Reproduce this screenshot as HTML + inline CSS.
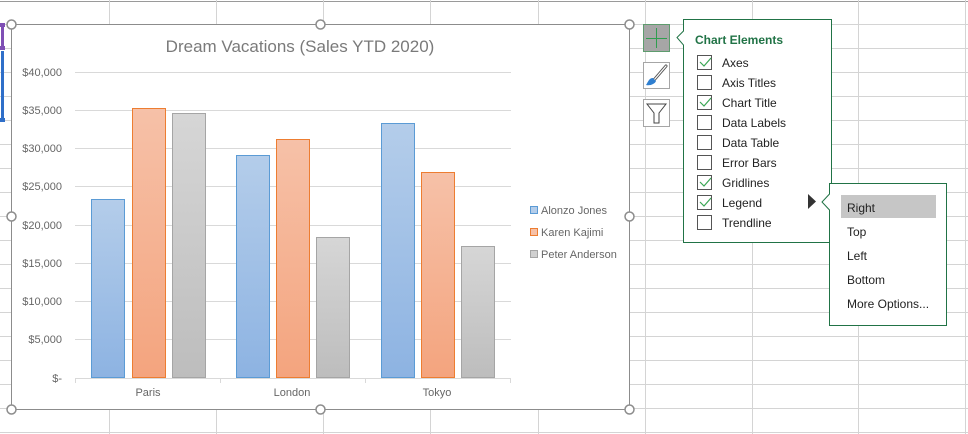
<!DOCTYPE html>
<html><head><meta charset="utf-8"><style>
body{margin:0;width:968px;height:434px;overflow:hidden;background:#fff;font-family:"Liberation Sans",sans-serif}
svg{position:absolute;left:0;top:0}
text{font-family:"Liberation Sans",sans-serif}
</style></head><body>
<svg width="968" height="434" viewBox="0 0 968 434">
<defs>
<linearGradient id="gb" x1="0" y1="0" x2="0" y2="1"><stop offset="0" stop-color="#b4cdea"/><stop offset="1" stop-color="#8db3e2"/></linearGradient>
<linearGradient id="go" x1="0" y1="0" x2="0" y2="1"><stop offset="0" stop-color="#f6c1a8"/><stop offset="1" stop-color="#f4a47e"/></linearGradient>
<linearGradient id="gg" x1="0" y1="0" x2="0" y2="1"><stop offset="0" stop-color="#d6d6d6"/><stop offset="1" stop-color="#bdbdbd"/></linearGradient>
</defs>
<!-- grid -->
<g stroke="#d4d4d4" stroke-width="1">
<line x1="0" y1="1.5" x2="968" y2="1.5" stroke="#9a9a9a"/>
<line x1="0" y1="24.5" x2="968" y2="24.5"/><line x1="0" y1="48.5" x2="968" y2="48.5"/><line x1="0" y1="72.5" x2="968" y2="72.5"/><line x1="0" y1="96.5" x2="968" y2="96.5"/><line x1="0" y1="120.5" x2="968" y2="120.5"/><line x1="0" y1="144.5" x2="968" y2="144.5"/><line x1="0" y1="168.5" x2="968" y2="168.5"/><line x1="0" y1="192.5" x2="968" y2="192.5"/><line x1="0" y1="216.5" x2="968" y2="216.5"/><line x1="0" y1="240.5" x2="968" y2="240.5"/><line x1="0" y1="264.5" x2="968" y2="264.5"/><line x1="0" y1="288.5" x2="968" y2="288.5"/><line x1="0" y1="312.5" x2="968" y2="312.5"/><line x1="0" y1="336.5" x2="968" y2="336.5"/><line x1="0" y1="360.5" x2="968" y2="360.5"/><line x1="0" y1="384.5" x2="968" y2="384.5"/><line x1="0" y1="408.5" x2="968" y2="408.5"/><line x1="0" y1="432.5" x2="968" y2="432.5"/>
<line x1="109.5" y1="0" x2="109.5" y2="434"/><line x1="216.5" y1="0" x2="216.5" y2="434"/><line x1="323.5" y1="0" x2="323.5" y2="434"/><line x1="430.5" y1="0" x2="430.5" y2="434"/><line x1="538.5" y1="0" x2="538.5" y2="434"/><line x1="645.5" y1="0" x2="645.5" y2="434"/><line x1="752.5" y1="0" x2="752.5" y2="434"/><line x1="858.5" y1="0" x2="858.5" y2="434"/><line x1="965.5" y1="0" x2="965.5" y2="434"/>
</g>
<!-- left selection -->
<rect x="1" y="25" width="3" height="24" fill="#7f4fb5"/><rect x="0" y="23" width="5" height="4" fill="#7f4fb5"/><rect x="0" y="46" width="5" height="4" fill="#7f4fb5"/>
<rect x="1" y="51" width="3" height="70" fill="#2f6fc9"/><rect x="0" y="118" width="5" height="4" fill="#2f6fc9"/>
<!-- chart -->
<rect x="11.5" y="24.5" width="618" height="385" fill="#fff" stroke="#8c8c8c"/>
<text x="300" y="52" font-size="17" fill="#7a7a7a" text-anchor="middle">Dream Vacations (Sales YTD 2020)</text>
<g stroke="#d9d9d9"><line x1="75" y1="72.5" x2="511" y2="72.5"/><line x1="75" y1="110.5" x2="511" y2="110.5"/><line x1="75" y1="148.5" x2="511" y2="148.5"/><line x1="75" y1="186.5" x2="511" y2="186.5"/><line x1="75" y1="225.5" x2="511" y2="225.5"/><line x1="75" y1="263.5" x2="511" y2="263.5"/><line x1="75" y1="301.5" x2="511" y2="301.5"/><line x1="75" y1="339.5" x2="511" y2="339.5"/><line x1="75" y1="378.5" x2="511" y2="378.5"/>
<line x1="75.5" y1="378" x2="75.5" y2="383"/><line x1="220.5" y1="378" x2="220.5" y2="383"/><line x1="365.5" y1="378" x2="365.5" y2="383"/><line x1="510.5" y1="378" x2="510.5" y2="383"/></g>
<g font-size="11" fill="#666" text-anchor="end">
<text x="62" y="76">$40,000</text><text x="62" y="114">$35,000</text><text x="62" y="152">$30,000</text><text x="62" y="190">$25,000</text><text x="62" y="229">$20,000</text><text x="62" y="267">$15,000</text><text x="62" y="305">$10,000</text><text x="62" y="343">$5,000</text><text x="62" y="382">$-</text></g>
<g>
<rect x="91.5" y="199.5" width="33" height="178" fill="url(#gb)" stroke="#5b9bd5"/>
<rect x="132.5" y="108.5" width="33" height="269" fill="url(#go)" stroke="#ed7d31"/>
<rect x="172.5" y="113.5" width="33" height="264" fill="url(#gg)" stroke="#a5a5a5"/>
<rect x="236.5" y="155.5" width="33" height="222" fill="url(#gb)" stroke="#5b9bd5"/>
<rect x="276.5" y="139.5" width="33" height="238" fill="url(#go)" stroke="#ed7d31"/>
<rect x="316.5" y="237.5" width="33" height="140" fill="url(#gg)" stroke="#a5a5a5"/>
<rect x="381.5" y="123.5" width="33" height="254" fill="url(#gb)" stroke="#5b9bd5"/>
<rect x="421.5" y="172.5" width="33" height="205" fill="url(#go)" stroke="#ed7d31"/>
<rect x="461.5" y="246.5" width="33" height="131" fill="url(#gg)" stroke="#a5a5a5"/>
</g>
<g font-size="11" fill="#666" text-anchor="middle"><text x="148" y="396">Paris</text><text x="292" y="396">London</text><text x="437" y="396">Tokyo</text></g>
<rect x="530.5" y="206.5" width="7" height="7" fill="#b4cdea" stroke="#5b9bd5"/>
<rect x="530.5" y="228.5" width="7" height="7" fill="#f6c1a8" stroke="#ed7d31"/>
<rect x="530.5" y="250.5" width="7" height="7" fill="#d0d0d0" stroke="#a5a5a5"/>
<g font-size="11" fill="#666"><text x="541" y="214">Alonzo Jones</text><text x="541" y="236">Karen Kajimi</text><text x="541" y="258">Peter Anderson</text></g>
<g fill="#fff" stroke="#8c8c8c" stroke-width="1.5">
<circle cx="11.5" cy="24.5" r="4.5"/><circle cx="320.5" cy="24.5" r="4.5"/><circle cx="629.5" cy="24.5" r="4.5"/>
<circle cx="11.5" cy="216.5" r="4.5"/><circle cx="629.5" cy="216.5" r="4.5"/>
<circle cx="11.5" cy="409.5" r="4.5"/><circle cx="320.5" cy="409.5" r="4.5"/><circle cx="629.5" cy="409.5" r="4.5"/></g>
<!-- side buttons -->
<rect x="643.5" y="24.5" width="26" height="27" fill="#a6a6a6" stroke="#5e9c6e"/>
<path d="M656.5 28v20M646 38.5h21" stroke="#2f9e4f" stroke-width="1"/>
<rect x="643.5" y="62.5" width="26" height="26" fill="#fff" stroke="#a6a6a6"/>
<path d="M666 66 L654 80" stroke="#555" stroke-width="3" stroke-linecap="round"/><path d="M666 66 L654 80" stroke="#fff" stroke-width="1.2" stroke-linecap="round"/>
<path d="M653 78 C649 78 648 82 646 85 C650 86 655 84 656 81 Z" fill="#2f7fd0"/>
<rect x="643.5" y="99.5" width="26" height="27" fill="#fff" stroke="#a6a6a6"/>
<path d="M647 104 H666 L659 113 V123 H654 V113 Z" fill="#fff" stroke="#444"/>
<!-- chart elements panel -->
<path d="M683.5 19.5 H831.5 V242.5 H683.5 V45 L677 37.5 L683.5 31 Z" fill="#fff" stroke="#217346"/>
<text x="695" y="44" font-size="12" font-weight="bold" fill="#217346">Chart Elements</text>
<g fill="#fff" stroke="#555"><rect x="697.5" y="55.5" width="14" height="14"/><rect x="697.5" y="75.5" width="14" height="14"/><rect x="697.5" y="95.5" width="14" height="14"/><rect x="697.5" y="115.5" width="14" height="14"/><rect x="697.5" y="135.5" width="14" height="14"/><rect x="697.5" y="155.5" width="14" height="14"/><rect x="697.5" y="175.5" width="14" height="14"/><rect x="697.5" y="195.5" width="14" height="14"/><rect x="697.5" y="215.5" width="14" height="14"/></g>
<g fill="none" stroke="#3aa655" stroke-width="1.2"><path d="M700 62 l4 4 l7 -8"/><path d="M700 102 l4 4 l7 -8"/><path d="M700 182 l4 4 l7 -8"/><path d="M700 202 l4 4 l7 -8"/></g>
<g font-size="12" fill="#222"><text x="722" y="67">Axes</text><text x="722" y="87">Axis Titles</text><text x="722" y="107">Chart Title</text><text x="722" y="127">Data Labels</text><text x="722" y="147">Data Table</text><text x="722" y="167">Error Bars</text><text x="722" y="187">Gridlines</text><text x="722" y="207">Legend</text><text x="722" y="227">Trendline</text></g>
<path d="M808 194 L816 201.5 L808 209 Z" fill="#333"/>
<!-- submenu -->
<path d="M829.5 183.5 H946.5 V325.5 H829.5 V210 L822 202 L829.5 194 Z" fill="#fff" stroke="#217346"/>
<rect x="841" y="195" width="95" height="23" fill="#c6c6c6"/>
<g font-size="12" fill="#222"><text x="847" y="212">Right</text><text x="847" y="236">Top</text><text x="847" y="260">Left</text><text x="847" y="284">Bottom</text><text x="847" y="308">More Options...</text></g>
</svg>
</body></html>
